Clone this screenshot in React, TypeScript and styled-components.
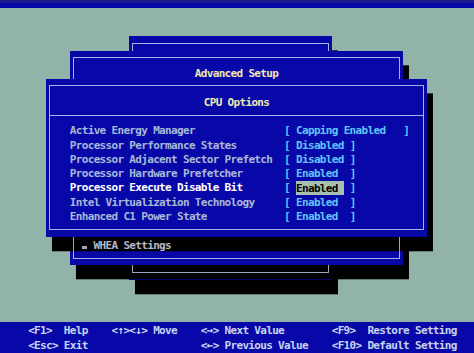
import React from "react";
import styled, { createGlobalStyle } from "styled-components";

// the screen is an 80x25 text grid, scaled
const C = 5.953;
const R = 14.3;
const X0 = -1.6;
const Y0 = -3.2;
const TOP_H = 11;

const TEAL = "#92b4a8";
const BLUE = "#0808a8";
const LINE = "#a8b0e8";
const GHOST = "#a4a4b8";

const GlobalStyle = createGlobalStyle`
  body {
    margin: 0;
    background: ${TEAL};
    font-family: "DejaVu Sans Mono", "Liberation Mono", monospace;
    font-size: 11px;
    font-weight: 700;
    letter-spacing: ${C - 0.602 * 11}px;
  }
`;

const Screen = styled.div`
  width: 474px;
  height: 353px;
  overflow: hidden;
  display: flex;
  flex-direction: column;
  background: ${TEAL};
`;

const TopBar = styled.div`
  height: ${TOP_H}px;
  box-sizing: border-box;
  border-top: 3px solid #1a1c8c;
  background: ${BLUE};
`;

const Desktop = styled.div`
  position: relative;
  flex: none;
  height: ${Y0 + 23 * R - TOP_H}px;
`;

const Window = styled.div<{ $col: number; $row: number; $cols: number; $rows: number }>`
  position: absolute;
  left: ${(p) => X0 + p.$col * C}px;
  top: ${(p) => Y0 + p.$row * R - TOP_H}px;
  width: ${(p) => p.$cols * C}px;
  height: ${(p) => p.$rows * R}px;
  background: ${BLUE};
  box-shadow: ${C}px ${R}px 0 #000;
  display: flex;
  flex-direction: column;
`;

const Row = styled.div<{ $ghost?: boolean }>`
  height: ${R}px;
  flex: none;
  display: flex;
  flex-direction: column;
  white-space: pre;
  ${(p) => p.$ghost && `position: relative; z-index: 1; background: #000;`}
`;

const Sides = styled.div<{ $ghost?: boolean; $edge?: "top" | "bottom"; $indent?: number }>`
  box-sizing: border-box;
  margin: ${(p) => (p.$edge === "top" ? R / 2 - 1 : 0)}px ${C / 2}px 0;
  height: ${(p) => (p.$edge ? R / 2 + 1 : R)}px;
  border: 1px solid ${(p) => (p.$ghost ? GHOST : LINE)};
  border-top-style: ${(p) => (p.$edge === "top" ? "solid" : "none")};
  border-bottom-style: ${(p) => (p.$edge === "bottom" ? "solid" : "none")};
  padding-left: ${(p) => (p.$indent ? p.$indent * C - C / 2 - 1 : 0)}px;
  display: flex;
  align-items: center;
`;

/* text rows sit a little low in their cell, as the BIOS font does */
const TextLine = styled(Sides)`
  align-items: flex-start;
  padding-top: 2px;
  line-height: 13px;
`;

const Title = styled(TextLine)`
  justify-content: center;
  color: #f0e8b0;
`;

const Rule = styled.div`
  flex: 1;
  border-top: 1px solid ${LINE};
`;

const Label = styled.span<{ $active?: boolean }>`
  flex: none;
  width: ${36 * C}px;
  color: ${(p) => (p.$active ? "#ffffff" : "#a8bad8")};
`;

const Value = styled.span`
  color: #62c4f4;
`;

const Hi = styled.span`
  background: #a8c0b0;
  color: #000;
  padding: 0.5px 0;
`;

const Bullet = styled.span`
  flex: none;
  width: 5px;
  height: 3px;
  margin: 7px ${2 * C - 5.5}px 0 0.5px;
  background: ${GHOST};
`;

const GhostText = styled.span`
  color: #b8b8c8;
`;

const BottomBar = styled.div`
  flex: 1;
  box-sizing: border-box;
  padding-top: 2px;
  background: ${BLUE};
  display: grid;
  grid-template-columns: ${[6, 8, 7, 8, 4, 18, 6].map((n) => `${n * C}px`).join(" ")} auto;
  grid-auto-rows: ${R}px;
  line-height: 13px;
  padding-left: ${X0 + 5 * C}px;
  color: #c8d4f0;
  white-space: pre;
`;

const items: { label: string; value: string; active?: boolean }[] = [
  { label: "Active Energy Manager", value: "Capping Enabled  " },
  { label: "Processor Performance States", value: "Disabled" },
  { label: "Processor Adjacent Sector Prefetch", value: "Disabled" },
  { label: "Processor Hardware Prefetcher", value: "Enabled " },
  { label: "Processor Execute Disable Bit", value: "Enabled ", active: true },
  { label: "Intel Virtualization Technology", value: "Enabled " },
  { label: "Enhanced C1 Power State", value: "Enabled " },
];

const keys = [
  "<F1>", "Help", "<↑><↓>", "Move", "<→>", "Next Value", "<F9>", "Restore Setting",
  "<Esc>", "Exit", "", "", "<←>", "Previous Value", "<F10>", "Default Setting",
];

const Body: React.FC<{ count: number }> = ({ count }) => (
  <>
    {Array.from({ length: count }, (_, i) => (
      <Row key={i}>
        <Sides />
      </Row>
    ))}
  </>
);

const App: React.FC = () => {
  return (
    <Screen>
      <GlobalStyle />
      <TopBar />
      <Desktop>
        <Window $col={22} $row={3} $cols={34} $rows={17}>
          <Row>
            <Sides $edge="top" />
          </Row>
          <Body count={15} />
          <Row $ghost>
            <Sides $edge="bottom" $ghost />
          </Row>
        </Window>

        <Window $col={12} $row={4} $cols={56} $rows={15}>
          <Row>
            <Sides $edge="top" />
          </Row>
          <Row>
            <Title>Advanced Setup</Title>
          </Row>
          <Row>
            <Sides>
              <Rule />
            </Sides>
          </Row>
          <Body count={10} />
          <Row $ghost>
            <TextLine $ghost $indent={2}>
              <Bullet />
              <GhostText>WHEA Settings</GhostText>
            </TextLine>
          </Row>
          <Row>
            <Sides $edge="bottom" />
          </Row>
        </Window>

        <Window $col={8} $row={6} $cols={64} $rows={11}>
          <Row>
            <Sides $edge="top" />
          </Row>
          <Row>
            <Title>CPU Options</Title>
          </Row>
          <Row>
            <Sides>
              <Rule />
            </Sides>
          </Row>
          {items.map((it) => (
            <Row key={it.label}>
              <TextLine $indent={4}>
                <Label $active={it.active}>{it.label}</Label>
                <Value>
                  {"[ "}
                  {it.active ? <Hi>{it.value}</Hi> : it.value}
                  {" ]"}
                </Value>
              </TextLine>
            </Row>
          ))}
          <Row>
            <Sides $edge="bottom" />
          </Row>
        </Window>
      </Desktop>
      <BottomBar>
        {keys.map((k, i) => (
          <span key={i}>{k}</span>
        ))}
      </BottomBar>
    </Screen>
  );
};

export default App;
